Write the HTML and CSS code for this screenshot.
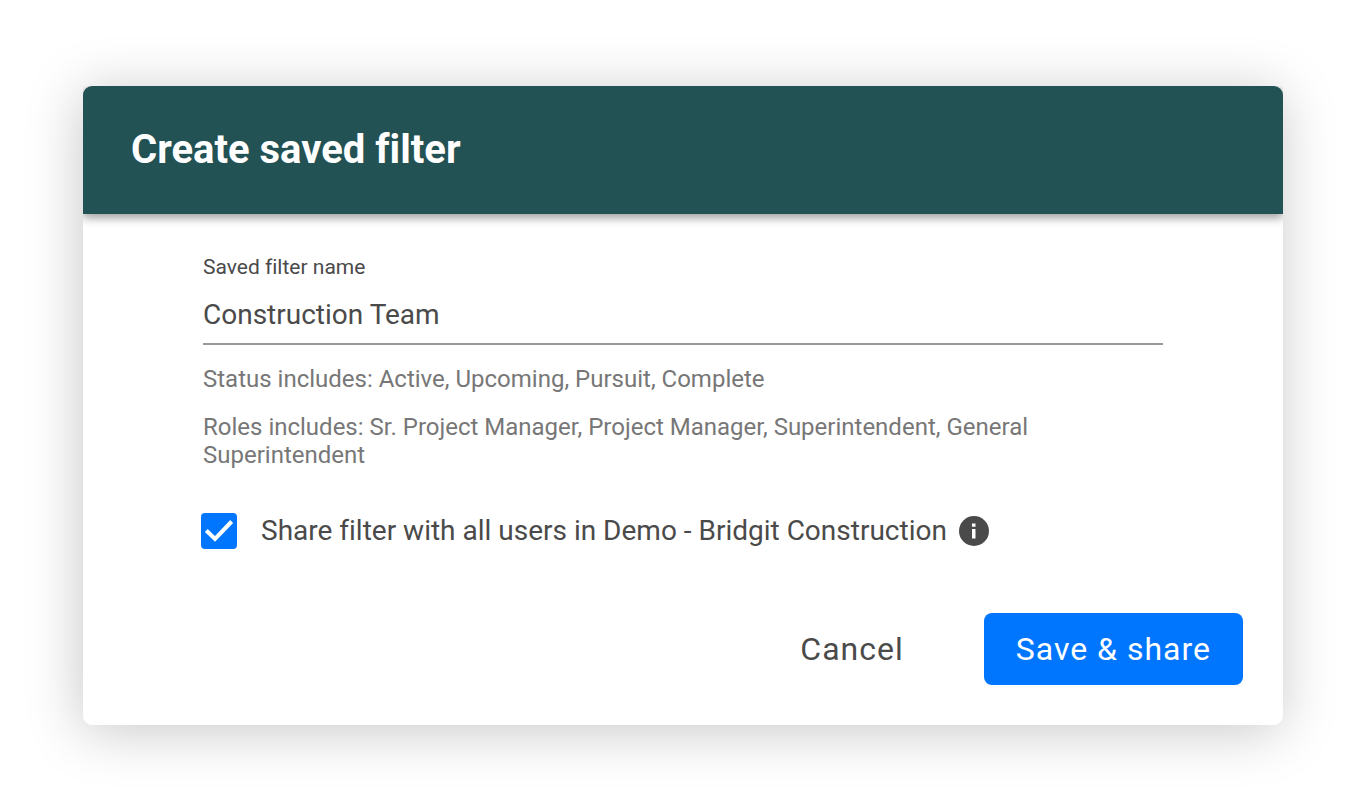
FILE: index.html
```html
<!DOCTYPE html>
<html lang="en">
<head>
<meta charset="utf-8">
<meta name="viewport" content="width=device-width, initial-scale=1">
<title>Create saved filter</title>
<link rel="stylesheet" href="styles.css">
</head>
<body>
<main class="page">
  <form class="dialog" role="dialog" aria-labelledby="dialog-title">
    <header class="dialog-header">
      <h1 class="dialog-title" id="dialog-title">Create saved filter</h1>
    </header>
    <div class="dialog-body">
      <label class="field-label" for="filter-name">Saved filter name</label>
      <input class="field-input" id="filter-name" type="text" value="Construction Team">
      <p class="summary">Status includes: Active, Upcoming, Pursuit, Complete</p>
      <p class="summary">Roles includes: Sr. Project Manager, Project Manager, Superintendent, General Superintendent</p>
      <div class="share">
        <input class="share-box" id="share" type="checkbox" checked>
        <label class="share-label" for="share">Share filter with all users in Demo - Bridgit Construction</label>
        <svg class="info" viewBox="0 0 30 30" role="img" aria-label="More information">
          <circle cx="15" cy="15" r="15" fill="#4a4a4a"/>
          <path d="M13 7.5h3.5v3.2H13zM13 13h3.5v9.5H13z" fill="#fff"/>
        </svg>
      </div>
    </div>
    <footer class="dialog-actions">
      <button class="button" type="button">Cancel</button>
      <button class="button button-primary" type="submit">Save &amp; share</button>
    </footer>
  </form>
</main>
</body>
</html>
```
FILE: styles.css
```css
* {
  box-sizing: border-box;
}

body {
  margin: 0;
  background: #fff;
  color: #4a4a4a;
  font-family: Roboto, "Liberation Sans", sans-serif;
  font-variant-ligatures: none;
}

.page {
  padding: 86px 81px 83px 83px;
}

.dialog {
  border-radius: 9px;
  background: #fff;
  box-shadow: -2px 6px 56px rgba(0, 0, 0, 0.22);
}

.dialog-header {
  padding: 40px 48px;
  border-radius: 9px 9px 0 0;
  background: #235254;
  box-shadow: 0 4px 10px rgba(0, 0, 0, 0.38);
  clip-path: inset(0 0 -20px 0);
}

.dialog-title {
  margin: 0;
  color: #fff;
  font-size: 40px;
  font-weight: 700;
  line-height: 48px;
}

.dialog-body {
  padding: 40px 120px 0;
}

.field-label {
  display: block;
  font-size: 21px;
  line-height: 26px;
}

.field-input {
  display: block;
  width: 100%;
  height: 65px;
  padding: 6px 0 0;
  border: 0;
  border-bottom: 2px solid #999;
  outline: 0;
  background: transparent;
  color: inherit;
  font: inherit;
  font-size: 28px;
}

.summary {
  margin: 20px 0 0;
  color: #777;
  font-size: 24px;
  line-height: 28px;
}

.share {
  display: flex;
  align-items: center;
  margin: 44px 0 0 -2px;
}

.share-box {
  flex: none;
  appearance: none;
  width: 36px;
  height: 36px;
  margin: 0 24px 0 0;
  border: 4px solid #757575;
  border-radius: 4px;
}

.share-box:checked {
  border: 0;
  background: #0076ff url("data:image/svg+xml,%3Csvg xmlns='http://www.w3.org/2000/svg' viewBox='0 0 36 36'%3E%3Cpath d='M5.3 17.5l8.7 8.5L30.7 8.5' fill='none' stroke='white' stroke-width='4'/%3E%3C/svg%3E");
}

.share-label {
  font-size: 28px;
  line-height: 36px;
}

.info {
  flex: none;
  width: 30px;
  height: 30px;
  margin-left: 12px;
}

.dialog-actions {
  display: flex;
  justify-content: flex-end;
  gap: 48px;
  padding: 64px 40px 40px;
}

.button {
  height: 72px;
  padding: 0 32px;
  border: 0;
  border-radius: 8px;
  background: transparent;
  color: inherit;
  font: inherit;
  font-size: 32px;
  letter-spacing: 1px;
}

.button-primary {
  background: #0076ff;
  color: #fff;
}
```
